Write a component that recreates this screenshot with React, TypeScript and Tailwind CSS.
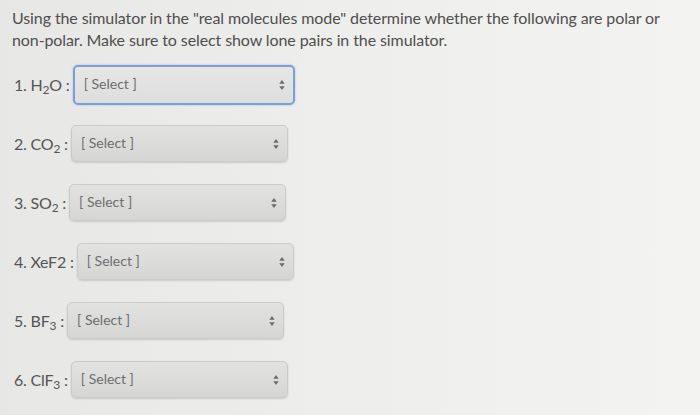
import { ReactNode } from "react";

interface Question {
  id: number;
  label: ReactNode;
  focused?: boolean;
}

const questions: Question[] = [
  { id: 1, label: <>1. H<sub>2</sub>O :</>, focused: true },
  { id: 2, label: <>2. CO<sub>2</sub> :</> },
  { id: 3, label: <>3. SO<sub>2</sub> :</> },
  { id: 4, label: <>4. XeF2 :</> },
  { id: 5, label: <>5. BF<sub>3</sub> :</> },
  { id: 6, label: <>6. ClF<sub>3</sub> :</> },
];

export default function App() {
  return (
    <div
      className="w-[700px] h-[415px] overflow-hidden bg-gradient-to-r from-[#e7e7e5] via-[#eeeeec] to-[#f3f3f2] text-[#4f4f4f]"
      style={{ fontFamily: "Lato, 'Open Sans', sans-serif" }}
    >
      <p className="pl-[12px] pt-[7px] text-[16px] leading-[22px] tracking-[-0.1px] w-[680px]">
        Using the simulator in the "real molecules mode" determine whether the following are polar or
        non-polar. Make sure to select show lone pairs in the simulator.
      </p>

      <div className="mt-[15px] pl-[14px] flex flex-col gap-[22px]">
        {questions.map(q => (
          <AnswerRow key={q.id} question={q} />
        ))}
      </div>
    </div>
  );
}

function AnswerRow({ question }: { question: Question }) {
  return (
    <div className="flex items-center gap-[3px] h-[37px]">
      <span className="text-[16px] leading-none text-[#555] tracking-[-0.2px]">{question.label}</span>
      <DropdownBox focused={question.focused} />
    </div>
  );
}

function DropdownBox({ focused }: { focused?: boolean }) {
  return (
    <div
      className={`relative rounded-[5px] ${
        focused
          ? "w-[222px] h-[40px] -my-[1px] border-[2.5px] border-[#7d9ed6] bg-gradient-to-b from-[#e6e6e5] to-[#dedede] shadow-[0_0_2px_rgba(90,130,200,0.5)]"
          : "w-[217px] h-[37px] border border-[#cbcbcb] bg-gradient-to-b from-[#e2e2e1] via-[#dcdcdb] to-[#d5d5d4] shadow-[0_1px_2px_rgba(0,0,0,0.14)]"
      }`}
    >
      <select
        className="w-full h-full appearance-none bg-transparent pl-[9px] pb-[3px] text-[14px] text-[#6e6e6e] outline-none"
        style={{ fontFamily: "Lato, 'Open Sans', sans-serif" }}
        defaultValue=""
      >
        <option value="">[ Select ]</option>
        <option value="polar">polar</option>
        <option value="non-polar">non-polar</option>
      </select>
      {/* up/down chevrons */}
      <svg
        className="absolute right-[8px] top-1/2 -translate-y-1/2 pointer-events-none"
        width="6"
        height="11"
        viewBox="0 0 6 11"
      >
        <path d="M3 0.5 L5.7 4.3 H0.3 Z" fill="#6a6a6a" />
        <path d="M3 10.5 L5.7 6.7 H0.3 Z" fill="#6a6a6a" />
      </svg>
    </div>
  );
}
